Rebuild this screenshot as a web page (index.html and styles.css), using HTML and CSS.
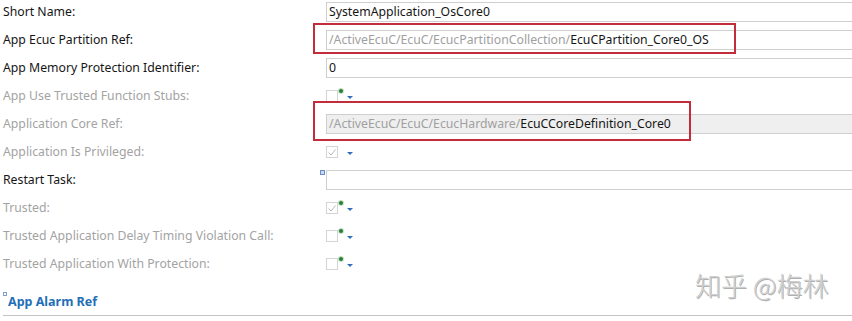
FILE: index.html
```html
<!DOCTYPE html>
<html>
<head>
<meta charset="utf-8">
<link rel="stylesheet" href="styles.css">
</head>
<body>
<div class="page">
  <div class="form">
    <div class="label">Short Name:</div>
    <div class="value"><div class="field">SystemApplication_OsCore0</div></div>

    <div class="label">App Ecuc Partition Ref:</div>
    <div class="value"><div class="field"><span class="path">/ActiveEcuC/EcuC/EcucPartitionCollection/</span>EcuCPartition_Core0_OS</div></div>

    <div class="label">App Memory Protection Identifier:</div>
    <div class="value"><div class="field">0</div></div>

    <div class="label dim">App Use Trusted Function Stubs:</div>
    <div class="value"><div class="check-wrap"><span class="box"></span><span class="star"></span><span class="arrow"></span></div></div>

    <div class="label dim">Application Core Ref:</div>
    <div class="value"><div class="field readonly"><span class="path">/ActiveEcuC/EcuC/EcucHardware/</span>EcuCCoreDefinition_Core0</div></div>

    <div class="label dim">Application Is Privileged:</div>
    <div class="value"><div class="check-wrap"><span class="box checked"><svg viewBox="0 0 12 12" width="12" height="12"><path d="M2.5 6.5 L5 9 L9.5 3.5" fill="none" stroke="#b8b8b8" stroke-width="1"/></svg></span><span class="nostar"></span><span class="arrow"></span></div></div>

    <div class="label">Restart Task:</div>
    <div class="value"><span class="mini-icon"></span><div class="field"></div></div>

    <div class="label dim">Trusted:</div>
    <div class="value"><div class="check-wrap"><span class="box checked"><svg viewBox="0 0 12 12" width="12" height="12"><path d="M2.5 6.5 L5 9 L9.5 3.5" fill="none" stroke="#b8b8b8" stroke-width="1"/></svg></span><span class="star"></span><span class="arrow"></span></div></div>

    <div class="label dim">Trusted Application Delay Timing Violation Call:</div>
    <div class="value"><div class="check-wrap"><span class="box"></span><span class="star"></span><span class="arrow"></span></div></div>

    <div class="label dim">Trusted Application With Protection:</div>
    <div class="value"><div class="check-wrap"><span class="box"></span><span class="star"></span><span class="arrow"></span></div></div>
  </div>

  <div class="section">
    <span class="sec-icon"></span>
    <span class="sec-title">App Alarm Ref</span>
  </div>
  <div class="rule"></div>

  <div class="mark mark-1"></div>
  <div class="mark mark-2"></div>
  <div class="watermark">知乎 @梅林</div>
</div>
</body>
</html>
```
FILE: styles.css
```css
html, body {
  margin: 0;
  padding: 0;
  background: #ffffff;
}
body {
  width: 852px;
  height: 321px;
  overflow: hidden;
  font-family: "Noto Sans", "Open Sans", sans-serif;
  font-size: 12.25px;
  color: #151515;
}
.page {
  position: relative;
  width: 852px;
  height: 321px;
}
.form {
  display: grid;
  grid-template-columns: 326px 526px;
  grid-auto-rows: 28px;
}
.label {
  padding-left: 3px;
  margin-top: 2px;
  height: 20px;
  line-height: 20px;
  white-space: nowrap;
  color: #151515;
}
.label.dim {
  color: #a3a3a3;
}
.value {
  position: relative;
}
.field {
  margin-top: 2px;
  height: 20px;
  box-sizing: border-box;
  border: 1px solid #cfcfcf;
  border-right: none;
  padding-left: 2px;
  line-height: 18px;
  white-space: nowrap;
  color: #151515;
  background: #fff;
}
.field.readonly {
  background: #efefef;
}
.path {
  color: #a0a0a0;
}
.check-wrap {
  display: flex;
  align-items: flex-start;
  margin-top: 6px;
  height: 14px;
}
.box {
  width: 12px;
  height: 12px;
  box-sizing: border-box;
  border: 1px solid #d4d4d4;
  background: #fff;
  display: block;
}
.box svg {
  display: block;
  margin: -1px 0 0 -1px;
}
.star {
  width: 4px;
  height: 4px;
  margin: -1px 0 0 1px;
  background: #2a7f35;
  border-radius: 50%;
  box-shadow: 0 0 0 1px rgba(60,160,70,0.3);
}
.nostar {
  width: 4px;
  height: 4px;
  margin-left: 1px;
}
.arrow {
  width: 0;
  height: 0;
  margin: 6px 0 0 4px;
  border-left: 3px solid transparent;
  border-right: 3px solid transparent;
  border-top: 3px solid #2f6fb8;
}
.mini-icon {
  position: absolute;
  left: -6px;
  top: 2px;
  width: 5px;
  height: 5px;
  box-sizing: border-box;
  border: 1px solid #6b8fc4;
  background: #c9d8ef;
}
.section {
  display: flex;
  align-items: flex-start;
  margin-top: 12px;
  height: 20px;
  padding-left: 3px;
}
.sec-icon {
  width: 4px;
  height: 4px;
  margin-top: 0;
  box-sizing: border-box;
  border: 1px solid #7f9fcf;
}
.sec-title {
  margin-left: 1px;
  line-height: 20px;
  font-weight: bold;
  font-size: 12.5px;
  color: #1f6fb8;
}
.rule {
  margin: 3px 0 0 3px;
  height: 1px;
  background: #c4c4c4;
}
.mark {
  position: absolute;
  box-sizing: border-box;
  border: 2px solid #c22c3b;
}
.mark-1 {
  left: 313px;
  top: 23px;
  width: 423px;
  height: 31px;
}
.mark-2 {
  left: 313px;
  top: 101px;
  width: 378px;
  height: 40px;
}
.watermark {
  position: absolute;
  left: 695px;
  top: 268px;
  font-family: "Noto Sans CJK SC", sans-serif;
  font-size: 26px;
  font-weight: 300;
  line-height: 34px;
  color: #cfcfcf;
  text-shadow: 1px 1px 0 #b0b0b0;
  white-space: nowrap;
}
```
